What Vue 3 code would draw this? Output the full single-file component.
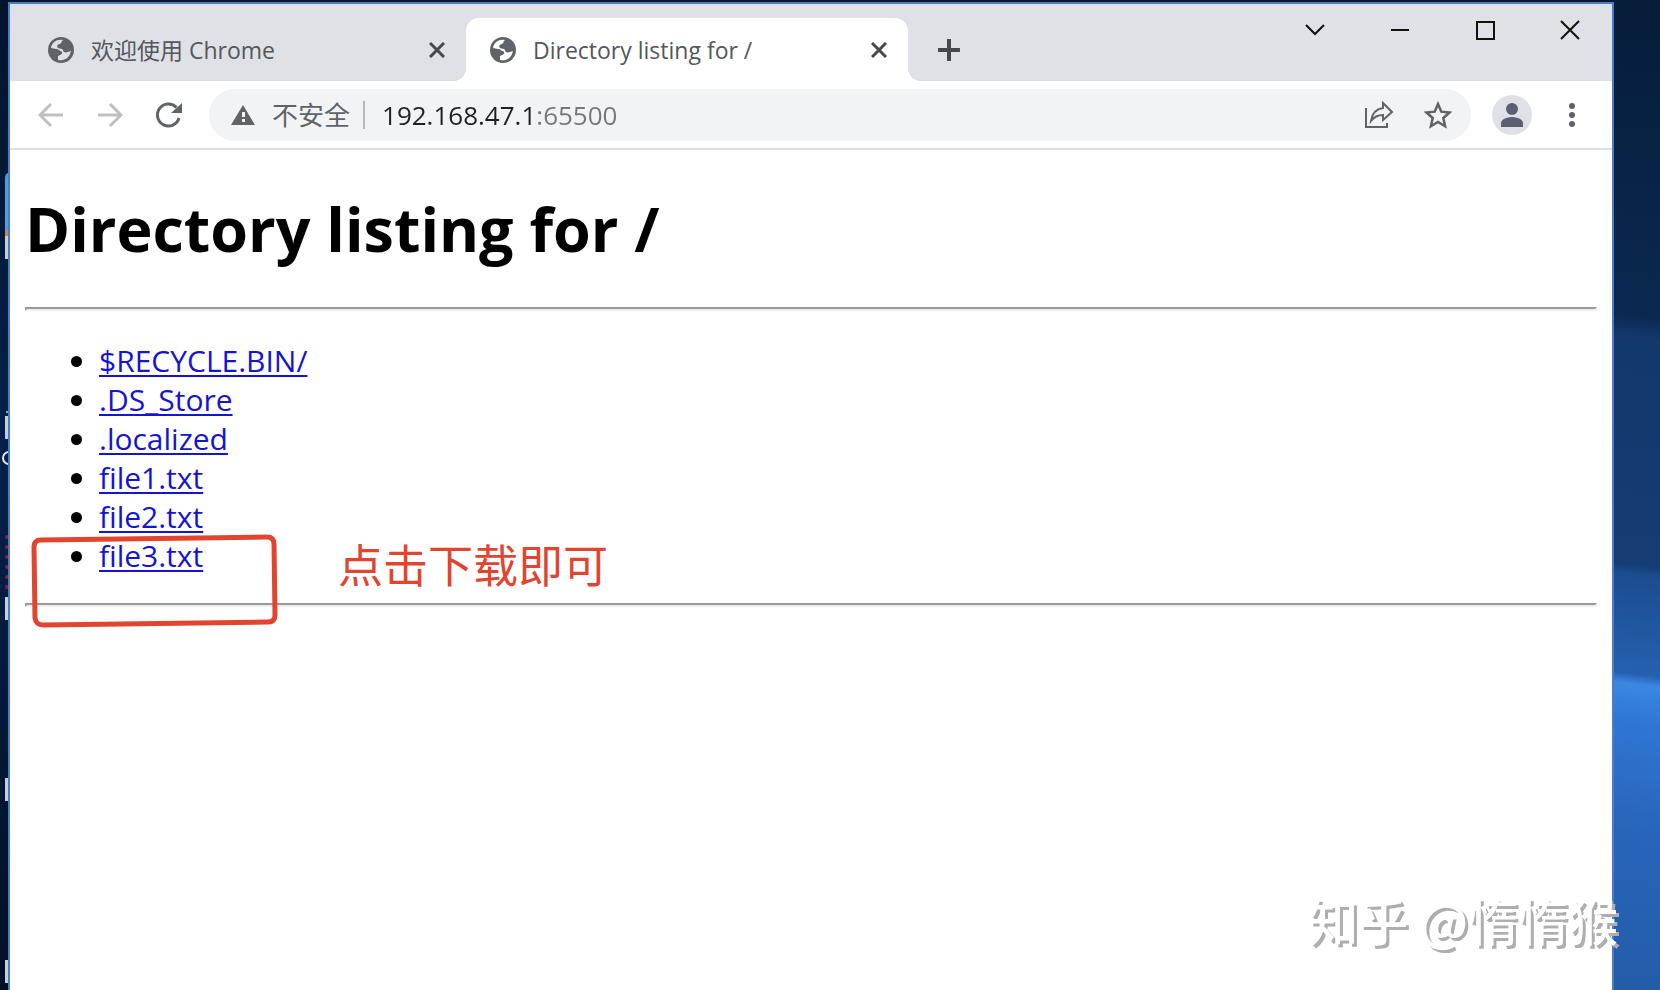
<script setup>
import { ref } from 'vue'

const address = ref('192.168.47.1:65500')

const tabs = [
  { title: '欢迎使用 Chrome', active: false },
  { title: 'Directory listing for /', active: true }
]

const files = ['$RECYCLE.BIN/', '.DS_Store', '.localized', 'file1.txt', 'file2.txt', 'file3.txt']

// Desktop icon labels that peek out from behind the window
const slivers = [236, 416, 597, 778, 960]
const dots = [537, 547, 557, 567, 577, 587]
</script>

<template>
  <div class="desktop">
    <div class="desktop-left">
      <svg width="8" height="990" viewBox="0 0 8 990" aria-hidden="true">
        <path d="M8 173q-3 1-3 5v52h3z" fill="#4b9ddd" />
        <path d="M5 230h3v6H5z" fill="#c98556" />
        <rect v-for="y in slivers" :key="y" x="5" :y="y" width="3" height="23" fill="#c9cedb" />
        <circle cx="7" cy="412" r="1" fill="#c9cedb" />
        <circle cx="9" cy="458" r="6" fill="none" stroke="#dfe3ea" stroke-width="2" />
        <circle v-for="y in dots" :key="y" cx="7" :cy="y" r="2" fill="#8f2238" />
      </svg>
    </div>

    <div class="window">
      <header class="tab-strip">
        <div v-for="tab in tabs" :key="tab.title" class="tab" :class="{ active: tab.active }">
          <svg class="globe" viewBox="0 0 26 26" aria-hidden="true">
            <circle cx="13" cy="13" r="13" fill="#5f6368" />
            <path
              d="M15 3C9 2 4 5 3 11l5 1c3 0 3 2 5 2 2 1 1 4-1 4l-2 1v4c5 1 10-1 12-6l1-3-3 1c-3 1-5 0-5-2-1-2-4-1-5-2-2-2 0-4 2-4 2-1 1-3 3-4z"
              :fill="tab.active ? '#fff' : '#dfe1e6'"
            />
          </svg>
          <span class="tab-title">{{ tab.title }}</span>
          <button class="tab-close" aria-label="Close tab">
            <svg width="16" height="16" viewBox="0 0 16 16">
              <path d="M1 1l14 14M15 1L1 15" stroke="#45484c" stroke-width="3" />
            </svg>
          </button>
        </div>
        <button class="new-tab" aria-label="New tab">
          <svg width="22" height="22" viewBox="0 0 22 22">
            <path d="M11 1v20M1 11h20" stroke="#45484c" stroke-width="4" stroke-linecap="round" />
          </svg>
        </button>
        <div class="window-controls">
          <button aria-label="Search tabs">
            <svg width="20" height="20" viewBox="0 0 20 20"><path d="M1 5l9 9 9-9" /></svg>
          </button>
          <button aria-label="Minimize">
            <svg width="20" height="20" viewBox="0 0 20 20"><path d="M1 10h18" /></svg>
          </button>
          <button aria-label="Maximize">
            <svg width="20" height="20" viewBox="0 0 20 20"><path d="M2 2h17v17H2z" /></svg>
          </button>
          <button aria-label="Close">
            <svg width="20" height="20" viewBox="0 0 20 20"><path d="M1 1l18 18M19 1L1 19" /></svg>
          </button>
        </div>
      </header>

      <nav class="toolbar">
        <button class="nav-button" aria-label="Back">
          <svg width="26" height="26" viewBox="0 0 26 26">
            <path d="M25 13H3M13 2L2 13l11 11" fill="none" stroke="#bdbfc2" stroke-width="3" />
          </svg>
        </button>
        <button class="nav-button" aria-label="Forward">
          <svg width="26" height="26" viewBox="0 0 26 26">
            <path d="M1 13h22M13 2l11 11-11 11" fill="none" stroke="#bdbfc2" stroke-width="3" />
          </svg>
        </button>
        <button class="nav-button" aria-label="Reload">
          <svg width="26" height="26" viewBox="0 0 26 26">
            <path d="M23 16A11 11 0 1 1 20.500 5.500" fill="none" stroke="#5f6368" stroke-width="3" />
            <path d="M26 1v10H15z" fill="#5f6368" />
          </svg>
        </button>

        <div class="omnibox">
          <button class="security">
            <svg width="24" height="20" viewBox="0 0 24 20" aria-hidden="true">
              <path d="M12 0l12 20H0z" fill="#5f6368" />
              <path d="M11 7h3v5h-3zM11 14h3v3h-3z" fill="#f1f3f4" />
            </svg>
            <span>不安全</span>
          </button>
          <input v-model="address" class="address" type="text" aria-label="Address" spellcheck="false" />
          <button class="omni-button" aria-label="Share">
            <svg width="30" height="28" viewBox="0 0 30 28">
              <path d="M2 7v19h21v-4" fill="none" stroke="#5f6368" stroke-width="2" />
              <path
                d="M19 2l9 9-9 8v-5c-6 0-9 2-12 6 1-8 5-12 12-13z"
                fill="none"
                stroke="#5f6368"
                stroke-width="2"
              />
            </svg>
          </button>
          <button class="omni-button" aria-label="Bookmark">
            <svg width="28" height="28" viewBox="0 0 28 28">
              <path
                d="M14 3l3.300 7.700 8.200.8-6.200 5.500 1.800 8.200-7.100-4.300-7.100 4.300 1.800-8.200-6.200-5.500 8.200-.8z"
                fill="none"
                stroke="#5f6368"
                stroke-width="2.500"
              />
            </svg>
          </button>
        </div>

        <button class="avatar" aria-label="Profile">
          <svg width="24" height="24" viewBox="0 0 24 24">
            <circle cx="12" cy="6" r="6" fill="#5a6072" />
            <path d="M1 24v-4c0-4 7-6 11-6s11 2 11 6v4z" fill="#5a6072" />
          </svg>
        </button>
        <button class="menu" aria-label="Menu">
          <svg width="6" height="26" viewBox="0 0 6 26">
            <circle cx="3" cy="4" r="3" />
            <circle cx="3" cy="13" r="3" />
            <circle cx="3" cy="22" r="3" />
          </svg>
        </button>
      </nav>

      <main class="page">
        <h1>Directory listing for /</h1>
        <hr />
        <ul>
          <li v-for="file in files" :key="file">
            <a :href="'#' + file">{{ file }}</a>
          </li>
        </ul>
        <hr />

        <svg class="marker-box" width="247" height="94" viewBox="0 0 247 94" aria-hidden="true">
          <path
            d="M10 6L236 3q7 0 7 7l1 71q0 7-7 7L12 91q-7 0-8-7L3 13q0-7 7-7z"
            fill="none"
            stroke="#e2452f"
            stroke-width="5"
          />
        </svg>
        <p class="marker-text">点击下载即可</p>
      </main>
    </div>

    <div class="desktop-right"></div>
    <div class="watermark">知乎 @惰惰猴</div>
  </div>
</template>

<style>
body {
  margin: 0;
  background: #04162f;
}
</style>

<style scoped>
.desktop {
  position: relative;
  display: flex;
  min-height: 100vh;
  overflow: hidden;
  font-family: 'Open Sans', 'Noto Sans CJK SC', sans-serif;
}

.desktop-left {
  width: 8px;
  height: 100vh;
  overflow: hidden;
  background: linear-gradient(#03142b, #04204a 45%, #021026);
}

.desktop-left svg {
  display: block;
}

.desktop-right {
  width: 46px;
  background: linear-gradient(187deg, #061d3a 0%, #0a2850 32%, #12386c 34%, #153c74 57%, #1c4c90 58%, #2560b0 68%, #3a87e2 69%, #2f76d4 73%, #2864ba 84%, #235ca8 100%);
}

.window {
  flex: 1;
  min-width: 0;
  display: flex;
  flex-direction: column;
  margin-top: 2px;
  border: 2px solid #4c7cc4;
  border-bottom: none;
  background: #fff;
}

button {
  display: flex;
  align-items: center;
  justify-content: center;
  padding: 0;
  border: none;
  background: none;
  font: inherit;
}

.tab-strip {
  display: flex;
  align-items: flex-end;
  height: 77px;
  background: #dfe1e6;
  box-shadow: inset 0 2px #d3e2f7;
}

.tab {
  position: relative;
  display: flex;
  align-items: center;
  box-sizing: border-box;
  width: 442px;
  height: 63px;
  padding: 0 18px 0 24px;
  color: #54575c;
}

.tab:first-child {
  margin-left: 14px;
}

.tab.active {
  border-radius: 13px 13px 0 0;
  background: #fff;
}

.tab.active::before,
.tab.active::after {
  content: '';
  position: absolute;
  bottom: 0;
  width: 13px;
  height: 13px;
}

.tab.active::before {
  right: 100%;
  background: radial-gradient(circle at 0 0, transparent 13px, #fff 13px);
}

.tab.active::after {
  left: 100%;
  background: radial-gradient(circle at 100% 0, transparent 13px, #fff 13px);
}

.globe {
  width: 26px;
  height: 26px;
}

.tab-title {
  flex: 1;
  margin-left: 17px;
  font-size: 23px;
  line-height: 30px;
  white-space: nowrap;
}

.tab-close,
.new-tab {
  width: 22px;
  height: 63px;
}

.new-tab {
  margin-left: 30px;
}

.window-controls {
  display: flex;
  align-self: flex-start;
  margin-left: auto;
}

.window-controls button {
  width: 85px;
  height: 52px;
}

.window-controls path {
  fill: none;
  stroke: #111;
  stroke-width: 2;
}

.toolbar {
  display: flex;
  align-items: center;
  height: 67px;
  padding: 0 37px 0 11px;
  border-bottom: 2px solid #dddfe2;
}

.nav-button {
  width: 59px;
  height: 52px;
}

.omnibox {
  flex: 1;
  display: flex;
  align-items: center;
  height: 52px;
  margin-left: 11px;
  padding: 0 4px 0 22px;
  border-radius: 26px;
  background: #f1f3f4;
}

.security {
  gap: 17px;
  padding-right: 13px;
  border-right: 2px solid #b4b7ba;
  color: #5f6368;
  font-size: 26px;
  line-height: 28px;
}

.address {
  flex: 1;
  min-width: 0;
  padding: 0;
  border: none;
  outline: none;
  margin-left: 17px;
  /* host dark, port grey */
  background: linear-gradient(90deg, #202124 154px, #74777b 154px);
  background-clip: text;
  -webkit-text-fill-color: transparent;
  font-family: inherit;
  font-size: 26px;
  line-height: 36px;
}

.omni-button {
  width: 59px;
  height: 52px;
}

.avatar {
  width: 40px;
  height: 40px;
  margin: 0 37px 0 21px;
  border-radius: 50%;
  background: #dfe1e6;
}

.menu {
  fill: #5f6368;
}

.page {
  position: relative;
  flex: 1;
  padding: 0 15px;
  color: #000;
}

h1 {
  margin: 38px 0 37px;
  font-size: 61px;
  line-height: 82px;
  white-space: nowrap;
}

hr {
  margin: 0;
  border: 2px solid;
  border-color: #999 #eee #eee #999;
}

ul {
  margin: 30px 0 28px;
  padding-left: 74px;
  font-size: 30px;
  line-height: 39px;
}

a {
  color: #1414d2;
  text-decoration-thickness: 2px;
  text-underline-offset: 3px;
}

/* Hand-drawn annotations over the page */
.marker-box {
  position: absolute;
  left: 21px;
  top: 384px;
}

.marker-text {
  position: absolute;
  left: 328px;
  top: 386px;
  margin: 0;
  color: #e2452f;
  font-size: 45px;
  line-height: 60px;
}

.watermark {
  position: absolute;
  right: 42px;
  bottom: 36px;
  color: #fff;
  font-family: 'Noto Sans CJK SC', sans-serif;
  font-size: 50px;
  font-weight: 500;
  line-height: 70px;
  text-shadow: 3px 3px #aeaeae;
}
</style>
